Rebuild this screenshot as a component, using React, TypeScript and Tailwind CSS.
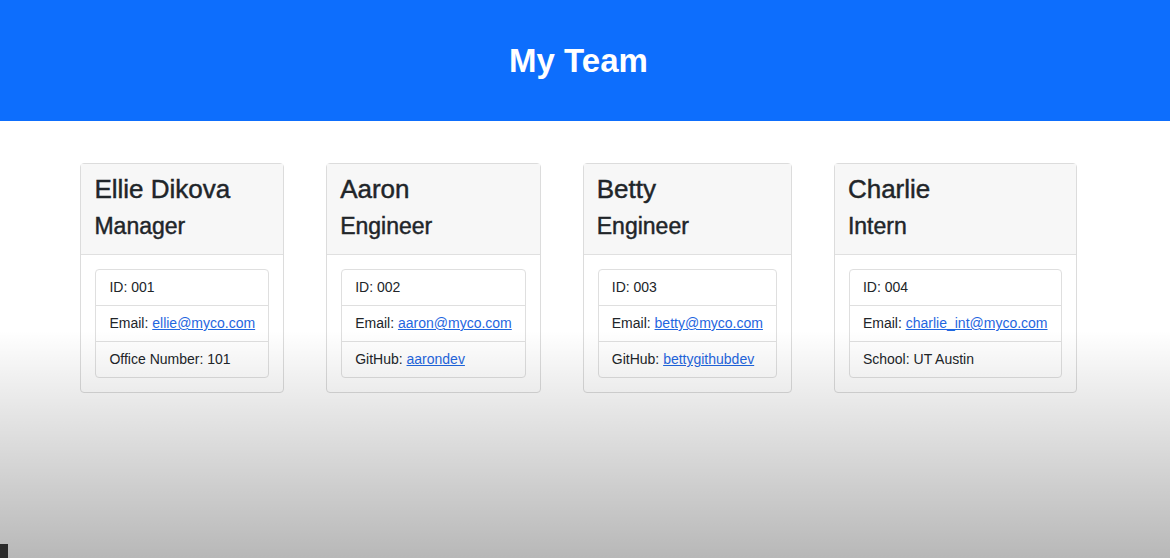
type Member = {
  name: string;
  role: string;
  id: string;
  email: string;
  extra: { label: string; value: string; link?: boolean };
};

const team: Member[] = [
  { name: 'Ellie Dikova', role: 'Manager', id: '001', email: 'ellie@myco.com', extra: { label: 'Office Number', value: '101' } },
  { name: 'Aaron', role: 'Engineer', id: '002', email: 'aaron@myco.com', extra: { label: 'GitHub', value: 'aarondev', link: true } },
  { name: 'Betty', role: 'Engineer', id: '003', email: 'betty@myco.com', extra: { label: 'GitHub', value: 'bettygithubdev', link: true } },
  { name: 'Charlie', role: 'Intern', id: '004', email: 'charlie_int@myco.com', extra: { label: 'School', value: 'UT Austin' } },
];

function Card({ m }: { m: Member }) {
  return (
    <div className="rounded-[4px] border border-[#dcdcdc] bg-white">
      <div className="border-b border-[#e0e0e0] bg-[#f7f7f7] px-[13px] pt-[9px] pb-[14px] [-webkit-text-stroke:0.45px_#212529]">
        <h2 className="text-[26px] leading-[32px]">{m.name}</h2>
        <h3 className="mt-[7px] text-[23px] leading-[28px]">{m.role}</h3>
      </div>
      <div className="p-[14px]">
        <ul className="rounded-[4px] border border-[#dfdfdf] text-[14px] leading-[21px]">
          <li className="px-[13px] py-[7px]">ID: {m.id}</li>
          <li className="border-t border-[#dfdfdf] px-[13px] py-[7px]">
            Email: <a href="#" className="text-[#1f66e0] underline">{m.email}</a>
          </li>
          <li className="border-t border-[#dfdfdf] px-[13px] py-[7px]">
            {m.extra.label}:{' '}
            {m.extra.link ? (
              <a href="#" className="text-[#1f66e0] underline">{m.extra.value}</a>
            ) : (
              m.extra.value
            )}
          </li>
        </ul>
      </div>
    </div>
  );
}

export default function App() {
  return (
    <div className="relative h-[558px] overflow-hidden bg-white text-[#212529]" style={{ fontFamily: '"Liberation Sans", Arial, sans-serif' }}>
      <header className="flex h-[121px] items-center justify-center bg-[#0d6efd] pr-[13px]">
        <h1 className="text-[33px] font-bold text-white">My Team</h1>
      </header>
      <main className="flex items-start justify-center gap-[42px] pt-[42px] pr-[13px]">
        {team.map((m) => (
          <Card key={m.id} m={m} />
        ))}
      </main>
      {/* fade at the bottom of the capture */}
      <div className="pointer-events-none absolute inset-x-0 top-[330px] bottom-0 bg-gradient-to-b from-transparent to-black/[0.28]" />
      <div className="absolute bottom-0 left-0 h-[14px] w-[8px] bg-[#2b2b2b]" />
    </div>
  );
}
